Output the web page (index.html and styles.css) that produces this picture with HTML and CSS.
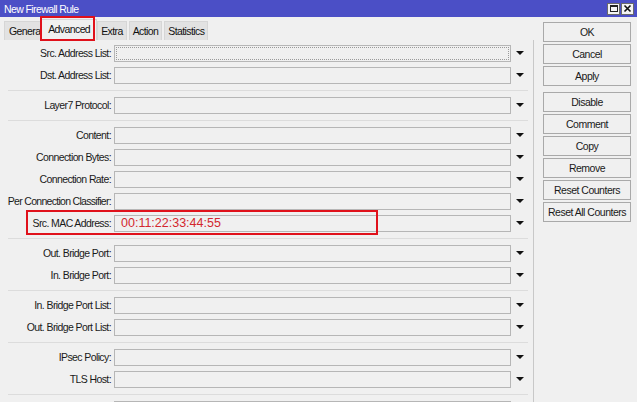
FILE: index.html
```html
<!DOCTYPE html>
<html>
<head>
<meta charset="utf-8">
<link rel="stylesheet" href="styles.css">
</head>
<body>
<div class="window">
  <div class="titlebar">
    <span class="title">New Firewall Rule</span>
    <span class="tb-btns">
      <span class="tb-btn"><span class="max-box"></span></span>
      <span class="tb-btn close">
        <svg width="9" height="9" viewBox="0 0 9 9"><path d="M1.5 1.5L7.5 7.5M7.5 1.5L1.5 7.5" stroke="#111" stroke-width="1.6"/></svg>
      </span>
    </span>
  </div>
  <div class="main">
    <div class="left">
      <div class="tabs">
        <div class="tab">General</div>
        <div class="tab active">Advanced<span class="hl-tab"></span></div>
        <div class="tab">Extra</div>
        <div class="tab">Action</div>
        <div class="tab">Statistics</div>
      </div>
      <div class="panel">
        <div class="group">
          <div class="row"><label>Src. Address List:</label><div class="field focus"></div><span class="arrow"></span></div>
          <div class="row"><label>Dst. Address List:</label><div class="field"></div><span class="arrow"></span></div>
        </div>
        <div class="sep"></div>
        <div class="group">
          <div class="row"><label>Layer7 Protocol:</label><div class="field"></div><span class="arrow"></span></div>
        </div>
        <div class="sep"></div>
        <div class="group">
          <div class="row"><label>Content:</label><div class="field"></div><span class="arrow"></span></div>
          <div class="row"><label>Connection Bytes:</label><div class="field"></div><span class="arrow"></span></div>
          <div class="row"><label>Connection Rate:</label><div class="field"></div><span class="arrow"></span></div>
          <div class="row"><label class="long">Per Connection Classifier:</label><div class="field"></div><span class="arrow"></span></div>
          <div class="row mac"><label>Src. MAC Address:</label><div class="field"><span class="mac-val">00:11:22:33:44:55</span></div><span class="arrow"></span><span class="hl-mac"></span></div>
        </div>
        <div class="sep"></div>
        <div class="group">
          <div class="row"><label>Out. Bridge Port:</label><div class="field"></div><span class="arrow"></span></div>
          <div class="row"><label>In. Bridge Port:</label><div class="field"></div><span class="arrow"></span></div>
        </div>
        <div class="sep"></div>
        <div class="group">
          <div class="row"><label>In. Bridge Port List:</label><div class="field"></div><span class="arrow"></span></div>
          <div class="row"><label>Out. Bridge Port List:</label><div class="field"></div><span class="arrow"></span></div>
        </div>
        <div class="sep"></div>
        <div class="group">
          <div class="row"><label>IPsec Policy:</label><div class="field"></div><span class="arrow"></span></div>
          <div class="row"><label>TLS Host:</label><div class="field"></div><span class="arrow"></span></div>
        </div>
        <div class="sep"></div>
        <div class="group">
          <div class="row"><label></label><div class="field"></div><span class="arrow"></span></div>
        </div>
      </div>
    </div>
    <div class="right">
      <div class="btns">
        <button class="btn">OK</button>
        <button class="btn">Cancel</button>
        <button class="btn">Apply</button>
      </div>
      <div class="btns second">
        <button class="btn">Disable</button>
        <button class="btn">Comment</button>
        <button class="btn">Copy</button>
        <button class="btn">Remove</button>
        <button class="btn">Reset Counters</button>
        <button class="btn">Reset All Counters</button>
      </div>
    </div>
  </div>
</div>
</body>
</html>
```
FILE: styles.css
```css
* { box-sizing: border-box; }
html, body { margin: 0; padding: 0; }
body {
  background: #f0f0f0;
  font-family: "Liberation Sans", Arial, sans-serif;
  font-size: 10.5px;
  letter-spacing: -0.6px;
  color: #1a1a1a;
}
.window {
  width: 637px;
  height: 402px;
  overflow: hidden;
  background: #f0f0f0;
}
.titlebar {
  height: 17px;
  background: #4b4fc6;
  color: #ffffff;
  display: flex;
  align-items: center;
  justify-content: space-between;
  padding: 0 3px 0 4px;
}
.title { font-size: 10.5px; }
.tb-btns { display: flex; gap: 1px; }
.tb-btn {
  width: 13px;
  height: 12px;
  background: #f4f4f4;
  border: 1px solid #6a6a6a;
  display: flex;
  align-items: center;
  justify-content: center;
}
.max-box {
  width: 8px;
  height: 7px;
  border: 1px solid #222;
  border-top-width: 2px;
}
.main {
  display: flex;
  height: 385px;
}
.left {
  width: 534px;
}
.tabs {
  display: flex;
  align-items: flex-end;
  height: 23px;
  padding-left: 4px;
}
.tab {
  position: relative;
  height: 19px;
  line-height: 18px;
  padding: 0 3px;
  margin-right: 2px;
  background: #e2e2e2;
  border: 1px solid #d6d6d6;
  border-bottom: none;
  color: #111;
  white-space: nowrap;
}
.tab:first-child { padding-left: 4px; }
.tab.active {
  z-index: 1;
  height: 21px;
  width: 56px;
  line-height: 19px;
  text-align: center;
  background: #f0f0f0;
  padding: 0;
  margin-left: -7px;
  margin-right: 0;
}
.hl-tab {
  position: absolute;
  left: -2px;
  top: -4px;
  width: 55px;
  height: 25px;
  border: 2px solid #e0111b;
}
.panel {
  padding-top: 2px;
  border-right: 1px solid #c8c8c8;
  height: 362px;
}
.row {
  position: relative;
  display: flex;
  align-items: center;
  height: 22px;
}
.row label {
  width: 112px;
  text-align: right;
  padding-right: 1px;
  flex: none;
  white-space: nowrap;
}
.row label.long { letter-spacing: -0.7px; }
.field {
  width: 397px;
  height: 17px;
  margin-left: 2px;
  border: 1px solid #b6b6b6;
  background: #f0f0f0;
  display: flex;
  align-items: center;
}
.field.focus {
  outline: 1px dotted #9a9a9a;
  outline-offset: -3px;
}
.arrow {
  width: 0;
  height: 0;
  margin-left: 5px;
  border-left: 4px solid transparent;
  border-right: 4px solid transparent;
  border-top: 4px solid #111;
}
.mac-val {
  color: #d3272f;
  font-size: 12.5px;
  letter-spacing: 0;
  padding-left: 6px;
}
.hl-mac {
  position: absolute;
  left: 26px;
  top: -2px;
  width: 352px;
  height: 25px;
  border: 2px solid #e0111b;
}
.sep {
  height: 1px;
  background: #dcdcdc;
  margin: 4px 5px 3px 8px;
}
.right {
  flex: 1;
  padding: 5px 6px 0 9px;
}
.btns {
  display: flex;
  flex-direction: column;
  gap: 2px;
}
.btns.second { margin-top: 6px; }
.btn {
  width: 88px;
  height: 20px;
  padding: 0;
  background: #f0f0f0;
  border: 1px solid #a9a9a9;
  font-family: inherit;
  font-size: 10.5px;
  letter-spacing: -0.5px;
  color: #1a1a1a;
}
```
